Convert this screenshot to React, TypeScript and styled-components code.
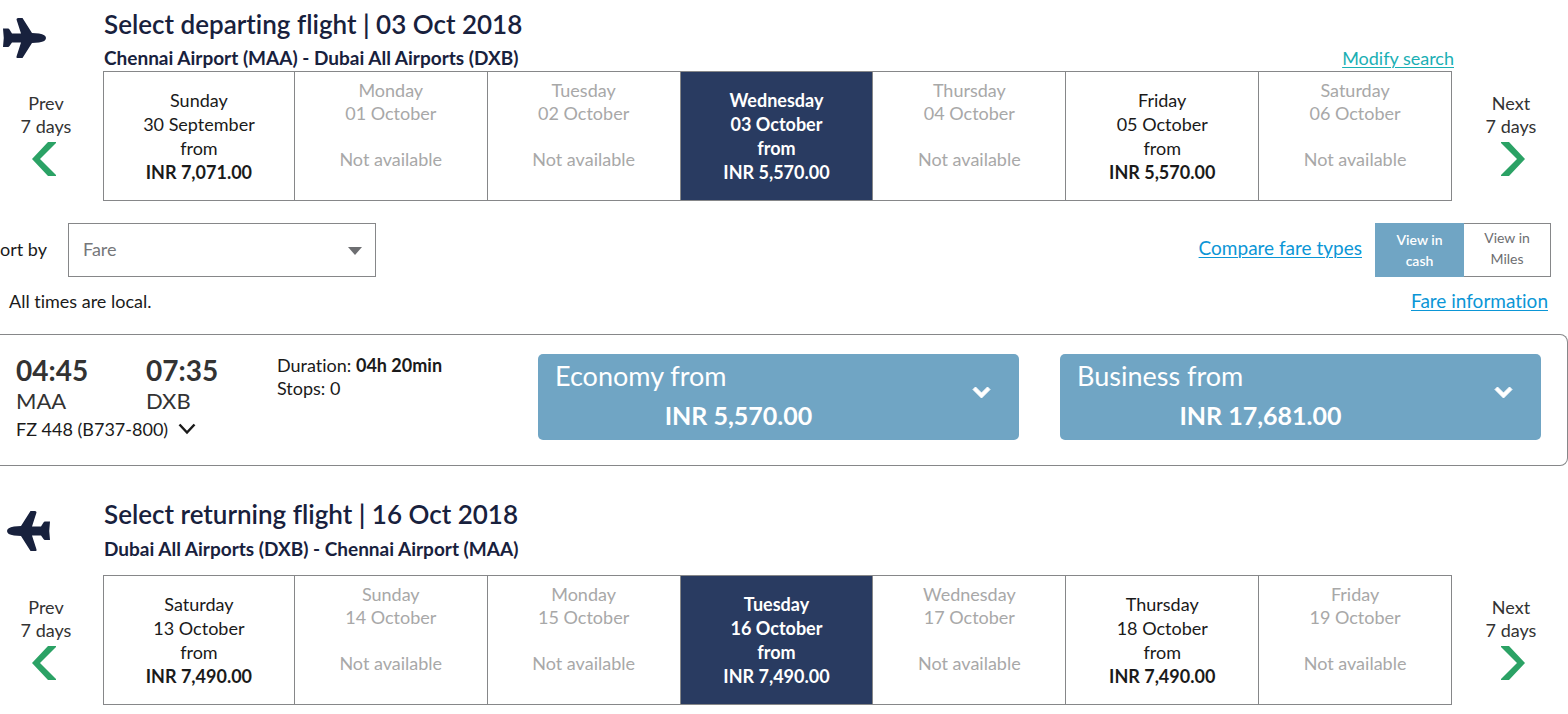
import React from "react";
import styled, { createGlobalStyle, css } from "styled-components";

const GlobalStyle = createGlobalStyle`
  *, *::before, *::after { box-sizing: border-box; }
  body {
    margin: 0;
    background: #fff;
    color: #1a1a1a;
    font-family: Lato, "Liberation Sans", sans-serif;
    font-size: 18px;
    font-variant-ligatures: none;
    line-height: 24px;
    overflow-x: hidden;
  }
  button, select { font: inherit; color: inherit; cursor: pointer; }
  h2, p { margin: 0; }
`;

const Page = styled.main`
  display: flex;
  flex-direction: column;
`;

const Leg = styled.section<{ $top: number }>`
  display: grid;
  grid-template-columns: 103px minmax(0, 1fr) 116px;
  padding-top: ${(p) => p.$top}px;
`;

const PlaneSlot = styled.div<{ $back?: boolean }>`
  padding: ${(p) => (p.$back ? "13px 0 0 7px" : "10px 0 0 3px")};
`;

const PlaneSvg = styled.svg`
  display: block;
  fill: #18213d;
`;

const Heading = styled.div<{ $space: number }>`
  grid-column: 2 / 4;
  display: flex;
  justify-content: space-between;
  align-items: flex-end;
  padding: 0 114px ${(p) => p.$space}px 1px;
  color: #18213d;
`;

const Title = styled.h2`
  font-size: 26px;
  line-height: 32px;
  font-weight: 600;
`;

const Route = styled.p<{ $gap: number }>`
  margin-top: ${(p) => p.$gap}px;
  font-size: 19px;
  font-weight: 700;
`;

const TextLink = styled.a<{ $teal?: boolean }>`
  color: ${(p) => (p.$teal ? "#1aafb4" : "#0b96d6")};
  font-size: ${(p) => (p.$teal ? 18 : 19)}px;
  text-decoration: underline;
  text-underline-offset: 2px;
  text-decoration-thickness: 1px;
`;

const WeekButton = styled.button`
  display: flex;
  flex-direction: column;
  align-items: center;
  justify-content: flex-start;
  padding: 21px 0 0 2px;
  border: 0;
  background: none;
  color: #333;
  line-height: 23px;
`;

const PrevButton = styled(WeekButton)`
  padding: 21px 11px 0 0;
`;

const ArrowSvg = styled.svg<{ $next?: boolean }>`
  display: block;
  margin: ${(p) => (p.$next ? "4px 0 0 3px" : "4px 4px 0 0")};
  fill: #2ba265;
`;

const Days = styled.div`
  display: grid;
  grid-template-columns: minmax(0, 192fr) repeat(6, minmax(0, 193fr));
  border: solid #868789;
  border-width: 1px 0;
`;

type DayState = "open" | "closed" | "selected";

const DayButton = styled.button<{ $state: DayState }>`
  display: flex;
  flex-direction: column;
  align-items: center;
  height: 128px;
  padding: 0;
  border: 0;
  border-right: 1px solid #868789;
  background: #fff;
  color: #1a1a1a;
  justify-content: center;
  &:first-child {
    border-left: 1px solid #868789;
  }
  ${(p) =>
    p.$state === "closed" &&
    css`
      justify-content: flex-start;
      padding-top: 7px;
      color: #a8a8a8;
      line-height: 23px;
      cursor: default;
    `}
  ${(p) =>
    p.$state === "selected" &&
    css`
      background: #293b61;
      color: #fff;
      font-weight: 700;
    `}
`;

const Price = styled.strong`
  font-weight: 700;
`;

const Unavailable = styled.span`
  margin-top: 23px;
`;

const Toolbar = styled.div`
  display: flex;
  align-items: center;
  padding: 22px 17px 0 0;
`;

const SortLabel = styled.label`
  width: 68px;
  padding-bottom: 2px;
`;

const SelectBox = styled.div`
  position: relative;
  width: 308px;
  margin-right: auto;
`;

const Select = styled.select`
  appearance: none;
  display: block;
  width: 100%;
  height: 54px;
  padding: 0 14px 2px;
  border: 1px solid #868789;
  border-radius: 0;
  background: #fff;
  color: #76777a;
`;

const Caret = styled.span`
  position: absolute;
  top: 24px;
  right: 14px;
  border: 7px solid transparent;
  border-top: 8px solid #6d6e71;
  border-bottom: 0;
  pointer-events: none;
`;

const CompareLink = styled(TextLink)`
  padding-bottom: 5px;
`;

const Toggle = styled.div`
  display: flex;
  height: 54px;
  margin-left: 13px;
`;

const ToggleButton = styled.button<{ $on?: boolean }>`
  width: ${(p) => (p.$on ? 89 : 87)}px;
  padding: ${(p) => (p.$on ? "0 16px 0 17px" : "0 16px 4px")};
  border: 1px solid ${(p) => (p.$on ? "#70a5c4" : "#868789")};
  border-left-width: 0;
  background: ${(p) => (p.$on ? "#70a5c4" : "#fff")};
  color: ${(p) => (p.$on ? "#fff" : "#6d6e71")};
  font-size: 14px;
  font-weight: ${(p) => (p.$on ? 600 : 400)};
  line-height: 21px;
`;

const Notes = styled.div`
  display: flex;
  justify-content: space-between;
  height: 57px;
  padding: 12px 20px 0 9px;
`;

const Flight = styled.article`
  display: grid;
  grid-template-columns: 130px 131px minmax(0, 261fr) minmax(0, 1003fr);
  min-height: 132px;
  padding: 19px 26px 23px 16px;
  border: 1px solid #868789;
  border-left: 0;
  border-radius: 0 8px 8px 0;
`;

const Times = styled.div`
  grid-column: 1 / 3;
  display: grid;
  grid-template-columns: 130px 131px;
  align-content: start;
  color: #333;
`;

const Time = styled.strong`
  font-size: 28px;
  font-weight: 700;
  line-height: 32px;
`;

const Airport = styled.span`
  font-size: 22px;
  line-height: 30px;
`;

const Aircraft = styled.button`
  grid-column: 1 / 3;
  display: flex;
  align-items: center;
  gap: 10px;
  padding: 0;
  border: 0;
  background: none;
  color: #1a1a1a;
  line-height: 26px;
`;

const Facts = styled.div`
  line-height: 23px;
`;

const Fares = styled.div`
  display: grid;
  grid-template-columns: 1fr 1fr;
  gap: 41px;
`;

const FareButton = styled.button`
  display: grid;
  grid-template-columns: minmax(0, 1fr) 75px;
  align-items: start;
  height: 86px;
  padding: 3px 0 0 17px;
  border: 0;
  border-radius: 5px;
  background: #70a5c4;
  color: #fff;
  text-align: left;
`;

const FareText = styled.span`
  display: flex;
  flex-direction: column;
`;

const CabinName = styled.span`
  font-size: 27px;
  line-height: 38px;
`;

const FarePrice = styled.strong`
  padding-right: 22px;
  font-size: 25px;
  line-height: 40px;
  font-weight: 700;
  text-align: center;
`;

const Chevron = styled.svg`
  display: block;
  margin-top: 29px;
`;

const Plane = ({ back }: { back?: boolean }) => (
  <PlaneSvg width="43" height="40" viewBox="0 0 43 40" aria-hidden="true">
    <path
      transform={back ? "translate(43 0) scale(-1 1)" : undefined}
      d="M0 10.500 L5 10.500 Q6 10.500 6.500 11.500 L9 15.500 L18 15.500 L13.500 1.500 Q13.500 0 15 0 L19.500 0 L29 15 L36 15.500 Q43 16.500 43 20 Q43 23.500 36 24.500 L29 25 L19.500 40 L14.500 40 Q13 40 13.500 38.500 L18 24.500 L9 24.500 L6.500 28 Q6 29 5 29 L0 29 Q1.500 20 0 10.500Z"
    />
  </PlaneSvg>
);

const Arrow = ({ next }: { next?: boolean }) => (
  <ArrowSvg $next={next} width="24" height="34" viewBox="0 0 24 34" aria-hidden="true">
    <path
      transform={next ? "translate(24 0) scale(-1 1)" : undefined}
      d="M16 0 H24 V1 L8 17 L24 33 V34 H16 L0 17Z"
    />
  </ArrowSvg>
);

interface Day {
  name: string;
  date: string;
  price?: string;
  selected?: boolean;
}

const outbound: Day[] = [
  { name: "Sunday", date: "30 September", price: "INR 7,071.00" },
  { name: "Monday", date: "01 October" },
  { name: "Tuesday", date: "02 October" },
  { name: "Wednesday", date: "03 October", price: "INR 5,570.00", selected: true },
  { name: "Thursday", date: "04 October" },
  { name: "Friday", date: "05 October", price: "INR 5,570.00" },
  { name: "Saturday", date: "06 October" },
];

const inbound: Day[] = [
  { name: "Saturday", date: "13 October", price: "INR 7,490.00" },
  { name: "Sunday", date: "14 October" },
  { name: "Monday", date: "15 October" },
  { name: "Tuesday", date: "16 October", price: "INR 7,490.00", selected: true },
  { name: "Wednesday", date: "17 October" },
  { name: "Thursday", date: "18 October", price: "INR 7,490.00" },
  { name: "Friday", date: "19 October" },
];

const Week = ({ days }: { days: Day[] }) => (
  <>
    <PrevButton type="button">
      <span>Prev</span>
      <span>7 days</span>
      <Arrow />
    </PrevButton>
    <Days>
      {days.map((d) => (
        <DayButton
          key={d.date}
          type="button"
          $state={d.selected ? "selected" : d.price ? "open" : "closed"}
          aria-pressed={!!d.selected}
        >
          <span>{d.name}</span>
          <span>{d.date}</span>
          {d.price ? (
            <>
              <span>from</span>
              <Price>{d.price}</Price>
            </>
          ) : (
            <Unavailable>Not available</Unavailable>
          )}
        </DayButton>
      ))}
    </Days>
    <WeekButton type="button">
      <span>Next</span>
      <span>7 days</span>
      <Arrow next />
    </WeekButton>
  </>
);

const Fare = ({ cabin, price }: { cabin: string; price: string }) => (
  <FareButton type="button">
    <FareText>
      <CabinName>{cabin}</CabinName>
      <FarePrice>{price}</FarePrice>
    </FareText>
    <Chevron width="75" height="14" viewBox="0 0 75 14" aria-hidden="true">
      <path
        d="M29 3.500 L31.500 1 L37.500 7 L43.500 1 L46 3.500 L37.500 12Z"
        fill="#fff"
        stroke="#fff"
        strokeWidth="1"
        strokeLinejoin="round"
      />
    </Chevron>
  </FareButton>
);

export default function App() {
  return (
    <Page>
      <GlobalStyle />
      <Leg $top={8}>
        <PlaneSlot>
          <Plane />
        </PlaneSlot>
        <Heading $space={1}>
          <div>
            <Title>Select departing flight | 03 Oct 2018</Title>
            <Route $gap={6}>Chennai Airport (MAA) - Dubai All Airports (DXB)</Route>
          </div>
          <TextLink $teal href="#search">Modify search</TextLink>
        </Heading>
        <Week days={outbound} />
      </Leg>

      <Toolbar>
        <SortLabel htmlFor="sort">ort by</SortLabel>
        <SelectBox>
          <Select id="sort" defaultValue="Fare">
            <option>Fare</option>
          </Select>
          <Caret />
        </SelectBox>
        <CompareLink href="#compare">Compare fare types</CompareLink>
        <Toggle>
          <ToggleButton type="button" $on aria-pressed="true">View in cash</ToggleButton>
          <ToggleButton type="button" aria-pressed="false">View in Miles</ToggleButton>
        </Toggle>
      </Toolbar>
      <Notes>
        <span>All times are local.</span>
        <TextLink href="#fares">Fare information</TextLink>
      </Notes>

      <Flight>
        <Times>
          <Time>04:45</Time>
          <Time>07:35</Time>
          <Airport>MAA</Airport>
          <Airport>DXB</Airport>
          <Aircraft type="button">
            FZ 448 (B737-800)
            <svg width="18" height="12" viewBox="0 0 18 12" aria-hidden="true">
              <path d="M1.500 1.500 L9 9.500 L16.500 1.500" fill="none" stroke="#1a1a1a" strokeWidth="2.500" />
            </svg>
          </Aircraft>
        </Times>
        <Facts>
          <div>Duration: <Price>04h 20min</Price></div>
          <div>Stops: 0</div>
        </Facts>
        <Fares>
          <Fare cabin="Economy from" price="INR 5,570.00" />
          <Fare cabin="Business from" price="INR 17,681.00" />
        </Fares>
      </Flight>

      <Leg $top={32}>
        <PlaneSlot $back>
          <Plane back />
        </PlaneSlot>
        <Heading $space={14}>
          <div>
            <Title>Select returning flight | 16 Oct 2018</Title>
            <Route $gap={7}>Dubai All Airports (DXB) - Chennai Airport (MAA)</Route>
          </div>
        </Heading>
        <Week days={inbound} />
      </Leg>
    </Page>
  );
}
